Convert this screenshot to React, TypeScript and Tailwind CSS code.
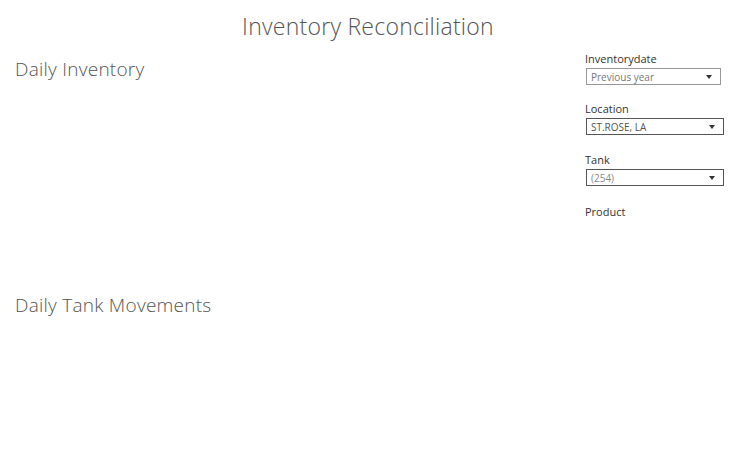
import React from "react";

function Caret() {
  return (
    <svg width="6" height="4" viewBox="0 0 6 4" className="shrink-0">
      <path d="M0 0 H6 L3 4 Z" fill="#333" />
    </svg>
  );
}

function Select({ value, w, border, color }: { value: string; w: string; border: string; color: string }) {
  return (
    <div className={`flex items-center justify-between h-[17px] border pl-[4px] pr-[8px] ${w} ${border}`}>
      <span className={`text-[10px] leading-none ${color}`}>{value}</span>
      <Caret />
    </div>
  );
}

export default function App() {
  return (
    <div
      className="w-[736px] h-[454px] bg-white flex flex-col overflow-hidden"
      style={{ fontFamily: "'Open Sans', 'Noto Sans', sans-serif" }}
    >
      <div className="h-[52px] flex justify-center pt-[11px]">
        <h1 className="text-[23px] leading-[30px] tracking-[0.25px] text-[#555] font-light">Inventory Reconciliation</h1>
      </div>
      <div className="flex flex-1">
        <div className="w-[585px] pl-[15px] flex flex-col">
          <h2 className="text-[19px] leading-[24px] tracking-[0.25px] text-[#555] font-light mt-[5px]">Daily Inventory</h2>
          <h2 className="text-[19px] leading-[24px] tracking-[0.25px] text-[#555] font-light mt-[212px]">Daily Tank Movements</h2>
        </div>
        <div className="flex flex-col pt-[0px]">
          <div className="text-[11px] leading-[14px] text-[#333]">Inventorydate</div>
          <div className="mt-[2px] pl-[1px]">
            <Select value="Previous year" w="w-[135px]" border="border-[#999]" color="text-[#777]" />
          </div>
          <div className="text-[11px] leading-[14px] text-[#333] mt-[17px]">Location</div>
          <div className="mt-[2px] pl-[1px]">
            <Select value="ST.ROSE, LA" w="w-[138px]" border="border-[#555]" color="text-[#555]" />
          </div>
          <div className="text-[11px] leading-[14px] text-[#333] mt-[18px]">Tank</div>
          <div className="mt-[2px] pl-[1px]">
            <Select value="(254)" w="w-[138px]" border="border-[#555]" color="text-[#888]" />
          </div>
          <div className="text-[11px] leading-[14px] text-[#333] mt-[19px]">Product</div>
        </div>
      </div>
    </div>
  );
}
